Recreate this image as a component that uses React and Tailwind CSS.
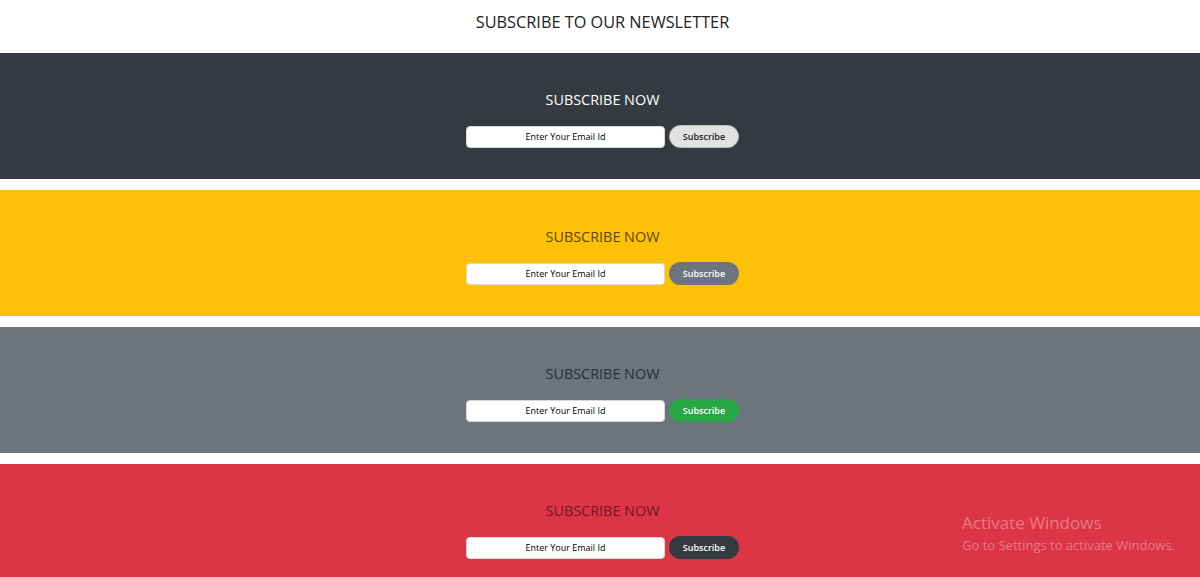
import React from "react";

const bands = [
  {
    bg: "bg-[#343a40]",
    head: "text-white",
    btn: "bg-[#e2e2e2] text-[#222] border border-[#bdbdbd]",
  },
  {
    bg: "bg-[#ffc107]",
    head: "text-[#5e4700]",
    btn: "bg-[#6c757d] text-white",
  },
  {
    bg: "bg-[#6c757d]",
    head: "text-[#2b2f33]",
    btn: "bg-[#28a745] text-white",
  },
  {
    bg: "bg-[#dc3545]",
    head: "text-[#6e1a22]",
    btn: "bg-[#343a40] text-white",
  },
];

function Band({ bg, head, btn }) {
  return (
    <section className={`${bg} h-[126px] flex flex-col items-center pt-[37px]`}>
      <h2 className={`${head} text-[14.4px] leading-[20px] font-normal pl-[5px]`}>
        SUBSCRIBE NOW
      </h2>
      <div className="mt-[15px] flex items-center gap-[4px] pl-[5px]">
        <input
          type="text"
          placeholder="Enter Your Email Id"
          className="w-[199px] h-[22px] bg-white rounded-[4px] border border-[#d8d8d8] text-center text-[9px] text-black placeholder:text-black outline-none"
        />
        <button
          className={`${btn} w-[70px] h-[23px] rounded-full text-[9px] font-semibold leading-none`}
        >
          Subscribe
        </button>
      </div>
    </section>
  );
}

export default function App() {
  return (
    <div
      className="relative w-[1200px] h-[577px] overflow-hidden bg-white"
      style={{ fontFamily: '"Open Sans", "Noto Sans", sans-serif' }}
    >
      <header className="h-[53px] pt-[12px] flex justify-center">
        <h1 className="text-[16.3px] leading-[20px] text-[#222] font-normal pl-[5px]">
          SUBSCRIBE TO OUR NEWSLETTER
        </h1>
      </header>
      <div className="flex flex-col gap-[11px]">
        {bands.map((b, i) => (
          <Band key={i} {...b} />
        ))}
      </div>
      <div className="absolute left-[962px] top-[511px] text-white/35 pointer-events-none">
        <div className="text-[17px] leading-[24px]">Activate Windows</div>
        <div className="text-[13px] leading-[16px] mt-[2px]">
          Go to Settings to activate Windows.
        </div>
      </div>
    </div>
  );
}
